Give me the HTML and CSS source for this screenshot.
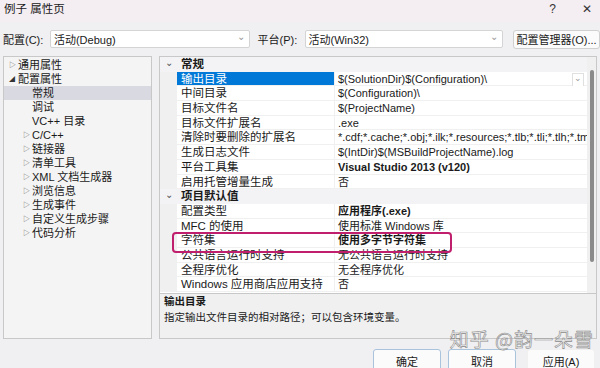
FILE: index.html
```html
<!DOCTYPE html>
<html lang="zh-CN">
<head>
    <meta charset="UTF-8">
    <title>例子 属性页</title>
    <link rel="stylesheet" href="styles.css">
</head>
<body>
    <div class="window">
        <div class="titlebar">
            <span class="title">例子 属性页</span>
            <span class="title-btns"><span class="help">?</span><span class="close">✕</span></span>
        </div>

        <div class="config-row">
            <span class="label">配置(C):</span>
            <div class="combo combo-config"><span>活动(Debug)</span><span class="caret">⌄</span></div>
            <span class="label label-platform">平台(P):</span>
            <div class="combo combo-platform"><span>活动(Win32)</span><span class="caret">⌄</span></div>
            <button class="mgr-btn">配置管理器(O)...</button>
        </div>

        <div class="main">
            <ul class="tree">
                <li class="lvl1"><span class="arrow">▷</span>通用属性</li>
                <li class="lvl1"><span class="arrow open">◢</span>配置属性</li>
                <li class="lvl2 leaf selected">常规</li>
                <li class="lvl2 leaf">调试</li>
                <li class="lvl2 leaf">VC++ 目录</li>
                <li class="lvl2"><span class="arrow">▷</span>C/C++</li>
                <li class="lvl2"><span class="arrow">▷</span>链接器</li>
                <li class="lvl2"><span class="arrow">▷</span>清单工具</li>
                <li class="lvl2"><span class="arrow">▷</span>XML 文档生成器</li>
                <li class="lvl2"><span class="arrow">▷</span>浏览信息</li>
                <li class="lvl2"><span class="arrow">▷</span>生成事件</li>
                <li class="lvl2"><span class="arrow">▷</span>自定义生成步骤</li>
                <li class="lvl2"><span class="arrow">▷</span>代码分析</li>
            </ul>

            <div class="right">
                <div class="grid">
                    <div class="rows">
                        <div class="row cat"><span class="chev">⌄</span><span class="name">常规</span></div>
                        <div class="row sel"><span class="gut"></span><span class="name">输出目录</span><span class="val">$(SolutionDir)$(Configuration)\</span><span class="drop">⌄</span></div>
                        <div class="row"><span class="gut"></span><span class="name">中间目录</span><span class="val">$(Configuration)\</span></div>
                        <div class="row"><span class="gut"></span><span class="name">目标文件名</span><span class="val">$(ProjectName)</span></div>
                        <div class="row"><span class="gut"></span><span class="name">目标文件扩展名</span><span class="val">.exe</span></div>
                        <div class="row"><span class="gut"></span><span class="name">清除时要删除的扩展名</span><span class="val">*.cdf;*.cache;*.obj;*.ilk;*.resources;*.tlb;*.tli;*.tlh;*.tmp</span></div>
                        <div class="row"><span class="gut"></span><span class="name">生成日志文件</span><span class="val">$(IntDir)$(MSBuildProjectName).log</span></div>
                        <div class="row"><span class="gut"></span><span class="name">平台工具集</span><span class="val bold">Visual Studio 2013 (v120)</span></div>
                        <div class="row"><span class="gut"></span><span class="name">启用托管增量生成</span><span class="val">否</span></div>
                        <div class="row cat"><span class="chev">⌄</span><span class="name">项目默认值</span></div>
                        <div class="row"><span class="gut"></span><span class="name">配置类型</span><span class="val bold">应用程序(.exe)</span></div>
                        <div class="row"><span class="gut"></span><span class="name">MFC 的使用</span><span class="val">使用标准 Windows 库</span></div>
                        <div class="row"><span class="gut"></span><span class="name">字符集</span><span class="val bold">使用多字节字符集</span></div>
                        <div class="row"><span class="gut"></span><span class="name">公共语言运行时支持</span><span class="val">无公共语言运行时支持</span></div>
                        <div class="row"><span class="gut"></span><span class="name">全程序优化</span><span class="val">无全程序优化</span></div>
                        <div class="row"><span class="gut"></span><span class="name">Windows 应用商店应用支持</span><span class="val">否</span></div>
                    </div>
                    <div class="scrollbar"><div class="thumb"></div></div>
                    <div class="mark"></div>
                </div>
                <div class="desc">
                    <div class="desc-title">输出目录</div>
                    <div class="desc-text">指定输出文件目录的相对路径；可以包含环境变量。</div>
                </div>
            </div>
        </div>

        <div class="footer">
            <button class="btn">确定</button>
            <button class="btn">取消</button>
            <button class="btn btn-apply">应用(A)</button>
            <span class="watermark">知乎 @韵一朵雪</span>
        </div>
    </div>
</body>
</html>
```

FILE: styles.css
```css
body { margin: 0; background: #f0eff1; font-family: "Liberation Sans", "Noto Sans CJK SC", sans-serif; font-size: 12px; color: #1a1a1a; }
.window { width: 600px; height: 368px; overflow: hidden; position: relative; }

.titlebar { height: 22px; background: #f4edf2; display: flex; justify-content: space-between; align-items: center; padding: 0 4px; }
.title { font-size: 11.5px; line-height: 14px; margin-top: -4px; }
.title-btns { display: flex; gap: 26px; font-size: 12px; color: #333; margin-right: 4px; margin-top: -4px; }

.config-row { display: flex; align-items: center; height: 18px; margin-top: 8px; padding-left: 3px; }
.label { width: 47px; font-size: 11px; }
.label-platform { margin-left: 8px; }
.combo { height: 16px; background: #fff; border: 1px solid #d4d4d4; border-radius: 2px; display: flex; justify-content: space-between; align-items: center; padding: 0 4px 0 3px; font-size: 11px; box-sizing: content-box; }
.combo-config { width: 191px; }
.combo-platform { width: 190px; }
.caret { color: #999; font-size: 10px; line-height: 10px; margin-top: -4px; }
.mgr-btn { margin-left: 10px; width: 87px; height: 19px; padding: 0; background: #fbfbfb; border: 1px solid #d0d0d0; border-radius: 3px; font-family: inherit; font-size: 11px; color: #1a1a1a; }

.main { display: flex; margin-top: 8px; padding-left: 3px; }
.tree { list-style: none; margin: 0; padding: 1px 0 0; width: 147px; height: 280px; background: #f4f4f4; border: 1px solid #c8c8c8; }
.tree li { height: 14px; line-height: 14px; font-size: 11px; white-space: nowrap; }
.tree .lvl1 { padding-left: 5px; }
.tree .lvl2 { padding-left: 19px; }
.tree .leaf { padding-left: 28px; }
.tree .selected { background: #d9d9e2; }
.arrow { display: inline-block; width: 9px; font-size: 7px; color: #666; vertical-align: top; }
.arrow.open { font-size: 6px; color: #333; }

.right { margin-left: 7px; width: 438px; }
.grid { position: relative; height: 236px; background: #fff; border: 1px solid #c8c8c8; display: flex; }
.rows { width: 427px; }
.row { height: 14.7px; line-height: 14.7px; display: flex; font-size: 11.5px; white-space: nowrap; overflow: hidden; position: relative; }
.row .gut { width: 17px; background: #f0f0f0; flex: none; }
.row .name { width: 157px; padding-left: 4px; flex: none; border-bottom: 1px solid #f0f0f0; box-sizing: border-box; }
.row .val { flex: 1; padding-left: 3px; font-size: 11px; border-bottom: 1px solid #f0f0f0; border-left: 1px solid #f0f0f0; overflow: hidden; }
.row .bold { font-weight: bold; }
.row.cat { background: #f3f3f5; font-weight: bold; }
.row.cat .chev { width: 17px; height: 14.7px; line-height: 12px; text-align: center; font-weight: normal; color: #555; font-size: 10px; }
.row.cat .name { border-bottom: none; }
.row.sel .name { background: #0078d7; color: #fff; }
.drop { position: absolute; right: 3px; top: 1px; width: 10px; height: 12px; border: 1px solid #e0e0e0; background: #fff; color: #999; font-size: 9px; line-height: 8px; text-align: center; }
.scrollbar { width: 10px; background: #f0f0f0; position: relative; }
.thumb { position: absolute; left: 3px; top: 13px; width: 4px; height: 192px; background: #8a8a8a; border-radius: 2px; }
.mark { position: absolute; left: 12px; top: 175px; width: 276px; height: 17px; border: 2px solid #c01f6d; border-radius: 4px; }

.desc { height: 45px; background: #f0f0f0; border: 1px solid #c8c8c8; border-top: none; padding: 0 4px; box-sizing: border-box; }
.desc-title { font-weight: bold; font-size: 10.5px; line-height: 15px; }
.desc-text { font-size: 10.5px; line-height: 16px; }

.footer { position: relative; display: flex; justify-content: flex-end; gap: 7px; padding-right: 5px; margin-top: 10px; }
.btn { width: 68px; height: 24px; background: #fbfbfb; border: 1px solid #a9c3dc; border-radius: 3px; font-family: inherit; font-size: 11px; color: #1a1a1a; }
.btn-apply { border-color: #f0f0f0; margin-left: 4px; }
.watermark { position: absolute; right: 6px; top: -24px; font-size: 19px; font-family: "Noto Sans CJK SC", sans-serif; color: rgba(255, 255, 255, 0.6); -webkit-text-stroke: 0.6px #8a8a8a; letter-spacing: 1px; }
```
